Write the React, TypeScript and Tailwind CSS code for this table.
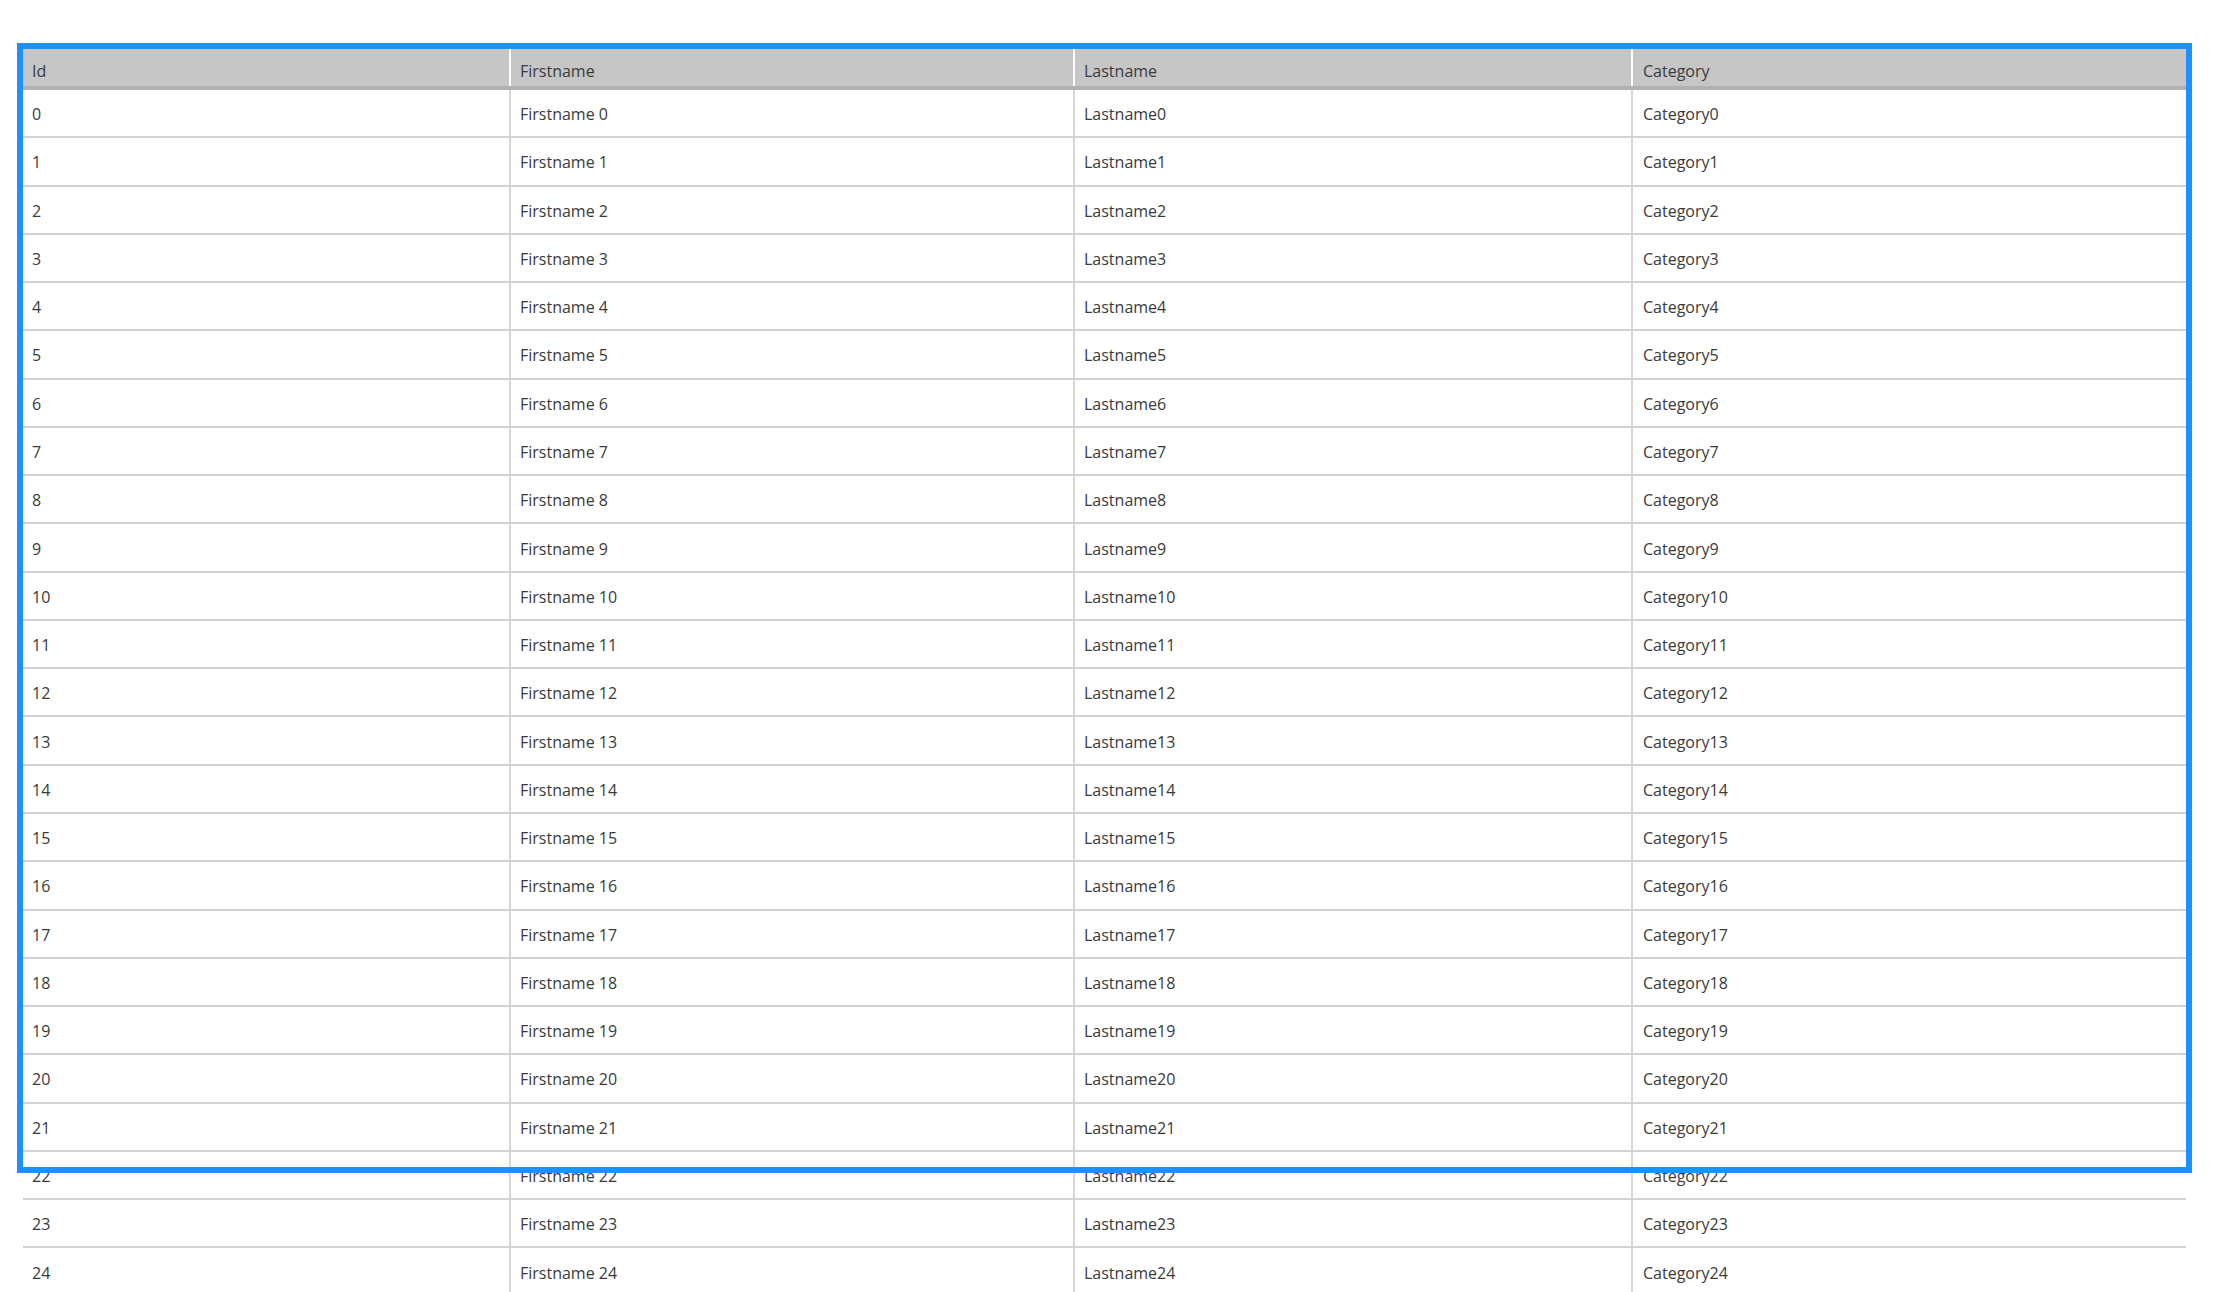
import React from "react";

const rows = Array.from({ length: 25 }, (_, i) => i);

export default function App() {
  return (
    <div className="h-[1292px] w-full overflow-hidden bg-white font-['Open_Sans',sans-serif] text-[16px] leading-6 text-[#3a3a3a]">
      <div className="ml-[23px] mt-[49px] h-[1118px] w-[2163px] outline-[6px] outline-solid outline-[#1e90ff]">
        <div className="grid h-[41px] grid-cols-[488px_564px_558px_553px] border-b-4 border-[#b1b1b1] bg-[#c6c6c6]">
          <div className="border-r-2 border-white pl-[9px] pt-[10px]">Id</div>
          <div className="border-r-2 border-white pl-[9px] pt-[10px]">Firstname</div>
          <div className="border-r-2 border-white pl-[9px] pt-[10px]">Lastname</div>
          <div className="pl-[10px] pt-[10px]">Category</div>
        </div>
        {rows.map((i) => (
          <div
            key={i}
            className="grid h-[48.27px] grid-cols-[488px_564px_558px_553px] border-b-2 border-[#d2d2d2] bg-white"
          >
            <div className="flex items-center border-r-2 border-[#d6d6d6] pl-[9px] pt-[2px]">{i}</div>
            <div className="flex items-center border-r-2 border-[#d6d6d6] pl-[9px] pt-[2px]">Firstname {i}</div>
            <div className="flex items-center border-r-2 border-[#d6d6d6] pl-[9px] pt-[2px]">Lastname{i}</div>
            <div className="flex items-center pl-[10px] pt-[2px]">Category{i}</div>
          </div>
        ))}
      </div>
    </div>
  );
}
